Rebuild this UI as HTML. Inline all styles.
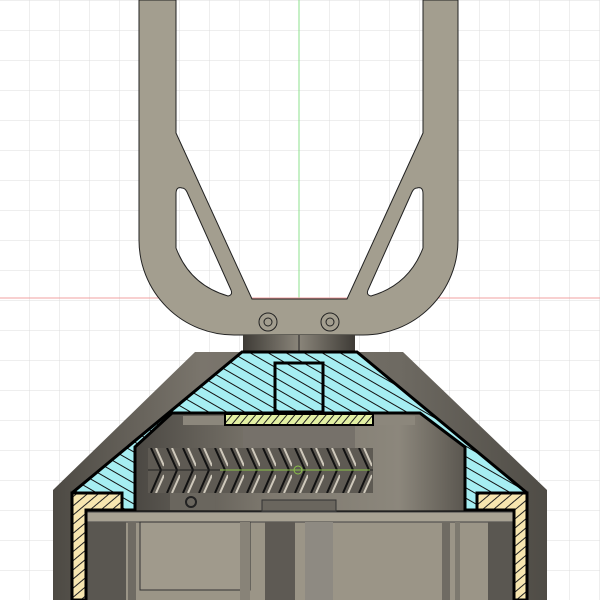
<!DOCTYPE html>
<html><head><style>html,body{margin:0;padding:0;background:#fff}svg{display:block}</style></head>
<body>
<svg width="600" height="600" viewBox="0 0 600 600" xmlns="http://www.w3.org/2000/svg">
<defs>
<pattern id="grid" width="30" height="30" patternUnits="userSpaceOnUse" x="29" y="0">
<path d="M0 0V30M0 0H30" stroke="#dcdcdc" stroke-width="1" fill="none"/>
</pattern>
<pattern id="hatch" width="9" height="9" patternUnits="userSpaceOnUse" patternTransform="rotate(30)">
<rect width="9" height="9" fill="#a6eef2"/>
<line x1="0" y1="0.5" x2="9" y2="0.5" stroke="#111" stroke-width="1"/>
</pattern>
<pattern id="hatchY" width="7" height="7" patternUnits="userSpaceOnUse" patternTransform="rotate(-40)">
<rect width="7" height="7" fill="#f7e6b0"/>
<line x1="0" y1="0.5" x2="7" y2="0.5" stroke="#222" stroke-width="1"/>
</pattern>
<pattern id="hatchG" width="6" height="6" patternUnits="userSpaceOnUse" patternTransform="rotate(-50)">
<rect width="6" height="6" fill="#e3f0a4"/>
<line x1="0" y1="0.5" x2="6" y2="0.5" stroke="#222" stroke-width="1"/>
</pattern>
<linearGradient id="cone" x1="0" x2="1">
<stop offset="0" stop-color="#4d4a44"/><stop offset=".3" stop-color="#7a756c"/><stop offset=".7" stop-color="#6e6a62"/><stop offset="1" stop-color="#4f4c46"/>
</linearGradient>
<linearGradient id="hub" x1="0" x2="1">
<stop offset="0" stop-color="#3e3b36"/><stop offset=".5" stop-color="#8a857a"/><stop offset="1" stop-color="#3e3b36"/>
</linearGradient>
<linearGradient id="house" x1="0" x2="1">
<stop offset="0" stop-color="#4b4843"/><stop offset=".4" stop-color="#7d786e"/><stop offset=".8" stop-color="#8c877c"/><stop offset="1" stop-color="#5a564f"/>
</linearGradient>
<pattern id="teeth" width="16" height="45" patternUnits="userSpaceOnUse" x="148" y="448">
<rect width="16" height="45" fill="#5e5a53"/>
<path d="M3 0L13 22L3 45" stroke="#111" stroke-width="2" fill="none"/>
<path d="M8 0L16 18M8 45L16 27" stroke="#cfc9bc" stroke-width="2"/>
</pattern>
</defs>
<rect width="600" height="600" fill="#fff"/>
<rect width="600" height="600" fill="url(#grid)"/>
<line x1="299" y1="0" x2="299" y2="300" stroke="#8de08d" stroke-width="1"/>
<line x1="0" y1="298" x2="600" y2="298" stroke="#f2a0a0" stroke-width="1"/>

<path fill-rule="evenodd" fill="#a39e8f" stroke="#222" stroke-width="1"
d="M139 0H176V133L252 299H347L423 133V0H458V240A95 95 0 0 1 363 335H234A95 95 0 0 1 139 240Z
M182 188Q176 186 176 194V248Q190 285 228 296Q233 295 231 290L187 192Q185 188 182 188Z
M417 188Q423 186 423 194V248Q409 285 371 296Q366 295 368 290L412 192Q414 188 417 188Z"/>
<circle cx="268" cy="322" r="9" fill="none" stroke="#222"/><circle cx="268" cy="322" r="4" fill="none" stroke="#222"/>
<circle cx="330" cy="322" r="9" fill="none" stroke="#222"/><circle cx="330" cy="322" r="4" fill="none" stroke="#222"/>

<rect x="243" y="335" width="112" height="18" fill="url(#hub)"/>
<line x1="299" y1="335" x2="299" y2="353" stroke="#222"/>

<path d="M195 352H403L547 490V600H53V490Z" fill="url(#cone)"/>
<path d="M242 352H357L527 493V510H72V493Z" fill="url(#hatch)" stroke="#000" stroke-width="3"/>
<rect x="275" y="363" width="48" height="49" fill="url(#hatch)" stroke="#000" stroke-width="3"/>
<path d="M135 447L172 413H420L465 447V512H135Z" fill="url(#house)" stroke="#000" stroke-width="3"/>
<rect x="183" y="416" width="232" height="9" fill="#8c877c"/>
<rect x="225" y="414" width="148" height="11" fill="url(#hatchG)" stroke="#000" stroke-width="2"/>
<rect x="243" y="426" width="112" height="22" fill="#76716a"/>
<rect x="148" y="448" width="225" height="45" fill="url(#teeth)"/>
<line x1="148" y1="470" x2="373" y2="470" stroke="#222"/>
<line x1="220" y1="470" x2="370" y2="470" stroke="#8bc34a"/>
<circle cx="298" cy="470" r="4" fill="none" stroke="#8bc34a"/>
<rect x="170" y="493" width="45" height="17" fill="#6a665e"/>
<circle cx="191" cy="502" r="5" fill="none" stroke="#222" stroke-width="2"/>
<rect x="262" y="500" width="74" height="11" fill="#6a665e" stroke="#333"/>

<rect x="86" y="512" width="428" height="88" fill="#9b9587"/>
<rect x="86" y="512" width="428" height="10" fill="#a8a293" stroke="#444"/>
<rect x="86" y="522" width="40" height="78" fill="#5a5751"/>
<rect x="128" y="522" width="8" height="78" fill="#6f6b63"/>
<rect x="140" y="522" width="110" height="68" fill="#a09a8c" stroke="#333"/>
<rect x="240" y="522" width="10" height="78" fill="#888378"/>
<rect x="265" y="522" width="30" height="78" fill="#5e5a54"/>
<rect x="305" y="522" width="28" height="78" fill="#8e8a82"/>
<rect x="442" y="522" width="8" height="78" fill="#6f6b63"/>
<rect x="455" y="522" width="5" height="78" fill="#7d796f"/>
<rect x="488" y="522" width="26" height="78" fill="#5a5751"/>

<path d="M72 493H122V510H86V600H72Z" fill="url(#hatchY)" stroke="#000" stroke-width="3"/>
<path d="M527 493H477V510H514V600H527Z" fill="url(#hatchY)" stroke="#000" stroke-width="3"/>
</svg>
</body></html>
